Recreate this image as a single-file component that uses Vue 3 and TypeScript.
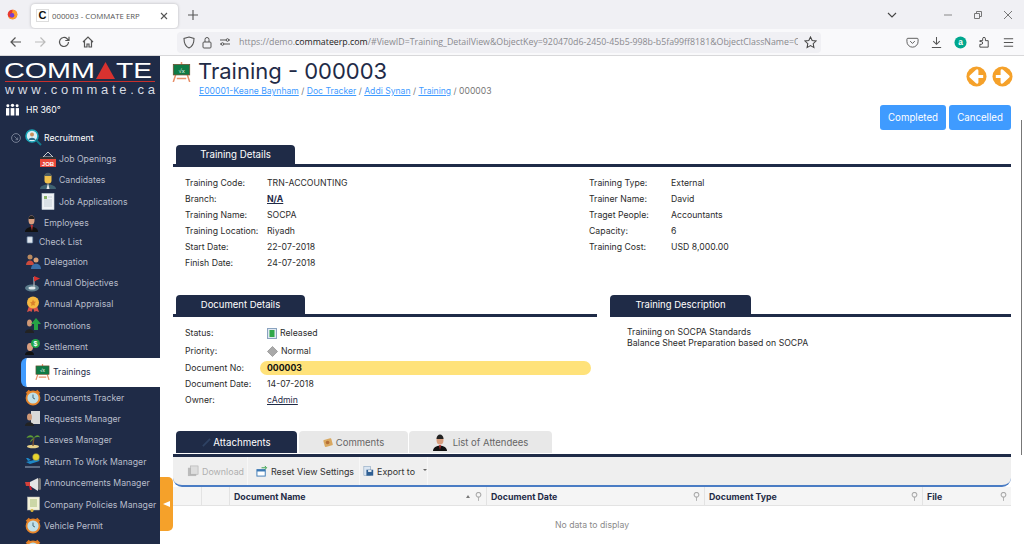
<script setup lang="ts">
interface NavItem { label: string; icon: string; cls?: string }
const icons: Record<string, string> = {
  search: '<circle cx="7" cy="7" r="6" fill="#d8eef5" stroke="#19a5b8" stroke-width="1.6"/><circle cx="7" cy="5.5" r="2" fill="#c98f5c"/><path d="M3.5 11c.5-3 6.500-3 7 0z" fill="#2b6a8a"/><path d="M11 11l5 5" stroke="#127a8c" stroke-width="2"/>',
  job: '<path d="M8 1L3 6h10z" fill="none" stroke="#ccc"/><rect x="0" y="6" width="16" height="10" fill="#e8483a"/><rect x="0" y="6" width="16" height="2" fill="#333"/><text x="8" y="14.500" font-size="6" font-family="Liberation Sans" font-weight="700" fill="#fff" text-anchor="middle">JOB</text>',
  cand: '<path d="M0 17c0-6 16-6 16 0z" fill="#3f6272"/><rect x="4.500" y="1.500" width="7" height="10" rx="3" fill="#f1c14d"/><path d="M4.500 4c0-4.500 7-4.500 7 0z" fill="#4a5a63"/><path d="M8 11l-1.500 6h3z" fill="#e8e8e8"/>',
  doc: '<rect x="2" y="0.500" width="12" height="16" fill="#eef2f6" stroke="#c8d4de" stroke-width=".6"/><path d="M8 4h4M4 7h8M4 9h8M4 11h8M4 13h8" stroke="#b9c7d1" stroke-width=".8"/><rect x="4" y="3" width="3" height="3" fill="#8ab56a"/>',
  emp: '<path d="M0 17c0-6 13-7 13 0z" fill="#111"/><ellipse cx="6.500" cy="5" rx="3" ry="4.500" fill="#d99f80"/><path d="M3.500 4c0-4.500 6-4.500 6 0z" fill="#222"/><path d="M5.500 10h2.500l-1 6z" fill="#b33"/>',
  check: '<rect x="1" y="1" width="8" height="9" rx="1" fill="#dfe6ee" stroke="#6c86a3" stroke-width="1"/>',
  deleg: '<circle cx="5" cy="4" r="2.500" fill="#b98a60"/><path d="M1 12c0-6 8-6 8 0z" fill="#cc4a3c"/><circle cx="11" cy="7" r="2.500" fill="#d8a078"/><path d="M6 16c0-7 10-7 10 0z" fill="#3a6fa8"/>',
  flag: '<ellipse cx="7" cy="13" rx="7" ry="3.500" fill="#5b7c8c"/><ellipse cx="7" cy="13" rx="3.500" ry="1.500" fill="#dfe8ec"/><path d="M9 12V2" stroke="#ccc"/><path d="M9 1l6 2.500-6 3z" fill="#d8322f"/>',
  award: '<path d="M4 10l-2 6 3-1 1.500 1 1.500-4zM12 10l2 6-3-1-1.500 1L8 12z" fill="#d9534a"/><circle cx="8" cy="6.500" r="6" fill="#f5b942"/><path d="M8 3.500l1 2 2 .3-1.500 1.500.4 2.100L8 8.900l-1.900 1 .4-2.100L5 6.300l2-.3z" fill="#d9822b"/>',
  promo: '<path d="M0 16c0-5 9-5 9 0z" fill="#222"/><ellipse cx="4.500" cy="6" rx="2.500" ry="3.500" fill="#cf9876"/><path d="M11 1l5 6h-3v6H9V7H6z" fill="#26a345"/>',
  settle: '<path d="M0 16c0-5 9-5 9 0z" fill="#111"/><ellipse cx="5" cy="8" rx="3" ry="4" fill="#d99f80"/><circle cx="10.500" cy="4.500" r="4.500" fill="#21a84a"/><text x="10.500" y="7" font-size="7" font-family="Liberation Sans" font-weight="700" fill="#fff" text-anchor="middle">$</text>',
  board: '<path d="M3 11l-2 6M13 11l2 6M4 14h8M8 0v2" stroke="#e8906a" stroke-width="1.300"/><rect x="1" y="2" width="14" height="9" fill="#0f7a45" stroke="#6d4a2a" stroke-width=".6"/><text x="8" y="9" font-size="5" font-family="Liberation Sans" fill="#fff" text-anchor="middle">√x</text>',
  clock: '<path d="M1.500 4.500l3-3M14.500 4.500l-3-3" stroke="#e07b22" stroke-width="2.200"/><circle cx="8" cy="9" r="6.500" fill="#bfe0e8" stroke="#e8862a" stroke-width="1.800"/><path d="M8 5.500V9l2 1" stroke="#4a6b78" fill="none"/>',
  req: '<rect x="6" y="1" width="9" height="13" fill="#d8d8d8"/><path d="M0 16c0-5 9-5 9 0z" fill="#222"/><ellipse cx="4.500" cy="7" rx="2.500" ry="3.500" fill="#cf9876"/>',
  palm: '<ellipse cx="8" cy="14.500" rx="6" ry="1.800" fill="#e9d28a"/><path d="M8 14c0-4 .5-6 1-8" stroke="#7a5230" stroke-width="1.300" fill="none"/><path d="M9 6C7 2 3 3 1.500 6c3-1 5-1 7.500 0zM9 6c1-3 5-4 6-.5-2-.8-4-.6-6 .5zM9 6c-2 .5-3.500 2-4 4.500C6.500 9 8 8 9 6z" fill="#5d9b35"/>',
  plane: '<path d="M1 9l12-3c2 0 2 2 0 2.500L5 11z" fill="#1e88c7"/><path d="M3 8L1 5h2l3 2z" fill="#1e88c7"/><circle cx="11" cy="4" r="3.500" fill="#e8d52e" stroke="#555" stroke-width=".4"/><path d="M0 14h15" stroke="#9fb0c4"/>',
  horn: '<path d="M0 7h5v4H1z" fill="#d4403a"/><path d="M5 7l8-4v13l-8-5z" fill="#e4e4e4"/><rect x="13" y="3" width="3" height="12" rx="1.500" fill="#777"/><path d="M4 11l1 4h2l-1-4z" fill="#c23"/>',
  policy: '<rect x="2.500" y="1" width="12" height="13" fill="#f3f2d8" stroke="#bbb" stroke-width=".5"/><path d="M5 4h7M5 6h7M5 8h7M5 10h7" stroke="#8fae5d" stroke-width=".8"/><circle cx="7" cy="14.500" r="1.500" fill="#d8b23a"/>'
}
const recruiting: NavItem[] = [
  { label: 'Job Openings', icon: 'job' },
  { label: 'Candidates', icon: 'cand' },
  { label: 'Job Applications', icon: 'doc' }
]
const before: NavItem[] = [
  { label: 'Employees', icon: 'emp' },
  { label: 'Check List', icon: 'check', cls: 'short' },
  { label: 'Delegation', icon: 'deleg' },
  { label: 'Annual Objectives', icon: 'flag' },
  { label: 'Annual Appraisal', icon: 'award' },
  { label: 'Promotions', icon: 'promo' },
  { label: 'Settlement', icon: 'settle' }
]
const after: NavItem[] = [
  { label: 'Documents Tracker', icon: 'clock' },
  { label: 'Requests Manager', icon: 'req' },
  { label: 'Leaves Manager', icon: 'palm' },
  { label: 'Return To Work Manager', icon: 'plane' },
  { label: 'Announcements Manager', icon: 'horn' },
  { label: 'Company Policies Manager', icon: 'policy' },
  { label: 'Vehicle Permit', icon: 'clock' },
  { label: '', icon: 'clock' }
]
const left = [
  ['Training Code:', 'TRN-ACCOUNTING'], ['Branch:', 'N/A'], ['Training Name:', 'SOCPA'],
  ['Training Location:', 'Riyadh'], ['Start Date:', '22-07-2018'], ['Finish Date:', '24-07-2018']
]
const right = [
  ['Training Type:', 'External'], ['Trainer Name:', 'David'], ['Traget People:', 'Accountants'],
  ['Capacity:', '6'], ['Training Cost:', 'USD 8,000.00']
]
const crumbs = ['E00001-Keane Baynham', 'Doc Tracker', 'Addi Synan', 'Training']
const columns = [
  { name: 'Document Name', cls: 'c-name', sort: true },
  { name: 'Document Date', cls: 'c-date' },
  { name: 'Document Type', cls: 'c-type' },
  { name: 'File', cls: 'c-file' }
]
</script>

<template>
  <div class="screen">
    <header class="chrome">
      <div class="tabstrip">
        <svg class="fx" viewBox="0 0 16 16" width="16" height="16"><circle cx="8" cy="8" r="7" fill="#e8392f"/><path d="M8 1a7 7 0 0 1 7 7c0 4-3 7-7 7-3 0-5-1-6-4 2 2 7 2 8-1 .7-2-1-4-3-4 1-1 1-3 1-5z" fill="#ff9d2a"/><circle cx="7.500" cy="9" r="3.200" fill="#7a3fd0"/></svg>
        <div class="tab">
          <span class="favicon">C</span>
          <span class="tabtitle">000003 - COMMATE ERP</span>
          <svg class="i" viewBox="0 0 10 10" width="10" height="10"><path d="M2 2l6 6M8 2l-6 6" stroke="#555" stroke-width="1.100"/></svg>
        </div>
        <svg class="plus" viewBox="0 0 12 12" width="12" height="12"><path d="M6 1v10M1 6h10" stroke="#555" stroke-width="1.100"/></svg>
        <span class="grow"></span>
        <svg class="win chev" viewBox="0 0 12 12" width="12" height="12"><path d="M2 4l4 4 4-4" stroke="#444" fill="none" stroke-width="1.100"/></svg>
        <svg class="win" viewBox="0 0 10 10" width="10" height="10"><path d="M1 5h8" stroke="#888"/></svg>
        <svg class="win" viewBox="0 0 10 10" width="10" height="10"><path d="M1.500 3.500h5v5h-5zM3.500 3.500v-2h5v5h-2" stroke="#777" fill="none"/></svg>
        <svg class="win last" viewBox="0 0 10 10" width="10" height="10"><path d="M1 1l8 8M9 1l-8 8" stroke="#777"/></svg>
      </div>
      <div class="navbar">
        <svg class="nb first" viewBox="0 0 14 14" width="14" height="14"><path d="M12 7H2M6.500 2.500L2 7l4.500 4.500" stroke="#555" fill="none" stroke-width="1.200"/></svg>
        <svg class="nb" viewBox="0 0 14 14" width="14" height="14"><path d="M2 7h10M7.500 2.500L12 7l-4.500 4.500" stroke="#bbb" fill="none" stroke-width="1.200"/></svg>
        <svg class="nb" viewBox="0 0 14 14" width="14" height="14"><path d="M11.500 7a4.500 4.500 0 1 1-1.400-3.300L12 5.500M12 1.800v3.700H8.300" stroke="#555" fill="none" stroke-width="1.200"/></svg>
        <svg class="nb" viewBox="0 0 14 14" width="14" height="14"><path d="M2 7l5-5 5 5M3.500 6v6h2.500V9h2v3h2.500V6" stroke="#555" fill="none" stroke-width="1.200"/></svg>
        <div class="urlbar">
          <svg viewBox="0 0 12 13" width="12" height="13"><path d="M6 1l5 1.500c0 5-1.500 8-5 9.500C2.500 10.500 1 7.500 1 2.500z" stroke="#555" fill="none" stroke-width="1.100"/></svg>
          <svg viewBox="0 0 12 13" width="12" height="13"><rect x="2" y="6" width="8" height="6" rx="1" stroke="#555" fill="none"/><path d="M4 6V3.500a2 2 0 0 1 4 0V6" stroke="#555" fill="none"/></svg>
          <svg viewBox="0 0 12 12" width="12" height="12"><path d="M1 4h6M10 4h1M1 8h1M5 8h6" stroke="#555"/><circle cx="8.500" cy="4" r="1.300" fill="none" stroke="#555"/><circle cx="3.500" cy="8" r="1.300" fill="none" stroke="#555"/></svg>
          <span class="url">https://demo.<b>commateerp.com</b>/#ViewID=Training_DetailView&amp;ObjectKey=920470d6-2450-45b5-998b-b5fa99ff8181&amp;ObjectClassName=C</span>
          <svg class="star" viewBox="0 0 14 14" width="13" height="13"><path d="M7 1l1.800 3.900 4.200.5-3.100 2.900.8 4.200L7 10.400l-3.700 2.100.8-4.200L1 5.400l4.200-.5z" stroke="#444" fill="none" stroke-width="1.100"/></svg>
        </div>
        <span class="grow"></span>
        <svg class="ext" viewBox="0 0 14 14" width="13" height="13"><path d="M2 2.500h10a1 1 0 0 1 1 1V6a6 6 0 0 1-12 0V3.500a1 1 0 0 1 1-1z" stroke="#555" fill="none"/><path d="M4.500 5.500L7 8l2.500-2.500" stroke="#555" fill="none"/></svg>
        <svg class="ext" viewBox="0 0 14 14" width="13" height="13"><path d="M7 1v8M3.500 5.500L7 9l3.500-3.500M2 12.500h10" stroke="#555" fill="none" stroke-width="1.100"/></svg>
        <svg class="ext" viewBox="0 0 14 14" width="13" height="13"><circle cx="7" cy="7" r="6.500" fill="#00a78e"/><text x="7" y="10" font-size="9" font-weight="700" font-family="Liberation Sans" fill="#fff" text-anchor="middle">a</text></svg>
        <svg class="ext" viewBox="0 0 14 14" width="13" height="13"><path d="M2 5h3V3a1.500 1.500 0 0 1 3 0v2h3v7H2V9h1.500a1.500 1.500 0 0 0 0-3H2z" stroke="#444" fill="none"/></svg>
        <svg class="ext" viewBox="0 0 14 14" width="13" height="13"><path d="M2 3h10M2 7h10M2 11h10" stroke="#555" stroke-width="1.200"/></svg>
      </div>
    </header>

    <div class="app">
      <aside class="side">
        <div class="logo">
          <svg viewBox="0 0 156 42" width="156" height="42">
            <text x="4" y="21" font-size="22" font-family="Liberation Sans" fill="#fff" textLength="91" lengthAdjust="spacingAndGlyphs">COMM</text>
            <path d="M96 22l9.500-17L115 22z" fill="#d8322f"/>
            <text x="116" y="21" font-size="22" font-family="Liberation Sans" fill="#fff" textLength="36" lengthAdjust="spacingAndGlyphs">TE</text>
            <rect x="5" y="24" width="150" height="1" fill="#c8302c"/>
            <text x="5" y="37" font-size="13" font-family="Liberation Sans" fill="#d7dbe3" textLength="150">www.commate.ca</text>
          </svg>
        </div>
        <div class="hr">
          <svg viewBox="0 0 16 14" width="15" height="13"><g fill="#fff"><circle cx="3" cy="3" r="1.600"/><circle cx="8" cy="2.500" r="1.800"/><circle cx="13" cy="3" r="1.600"/><rect x="1" y="5.500" width="3.500" height="8"/><rect x="6" y="5.500" width="4" height="8"/><rect x="11.500" y="5.500" width="3.500" height="8"/></g></svg>
          <span>HR 360°</span>
        </div>
        <nav class="menu">
          <div class="row top">
            <svg class="collapse" viewBox="0 0 10 10" width="10" height="10"><circle cx="5" cy="5" r="4.400" fill="none" stroke="#8a93a6" stroke-width=".8"/><path d="M3.300 3.300l3.400 3.400M6.700 4.500v2.200H4.500" stroke="#8a93a6" stroke-width=".7" fill="none"/></svg>
            <svg class="icon" viewBox="0 0 17 17" width="17" height="17" v-html="icons.search"></svg>
            <span>Recruitment</span>
          </div>
          <div v-for="item in recruiting" :key="item.label" class="row sub">
            <svg class="icon" viewBox="0 0 16 17" width="16" height="17" v-html="icons[item.icon]"></svg>
            <span>{{ item.label }}</span>
          </div>
          <div v-for="item in before" :key="item.label" class="row" :class="item.cls">
            <svg class="icon" viewBox="0 0 16 17" width="16" height="17" v-html="icons[item.icon]"></svg>
            <span>{{ item.label }}</span>
          </div>
          <div class="row active">
            <svg class="icon" viewBox="0 0 16 17" width="15" height="16" v-html="icons.board"></svg>
            <span>Trainings</span>
          </div>
          <div v-for="(item, i) in after" :key="i" class="row">
            <svg class="icon" viewBox="0 0 16 17" width="16" height="17" v-html="icons[item.icon]"></svg>
            <span>{{ item.label }}</span>
          </div>
        </nav>
      </aside>

      <main class="main">
        <div class="handle"><i></i></div>
        <div class="scroll"></div>
        <div class="head">
          <svg class="hicon" viewBox="0 0 16 17" width="19" height="20" v-html="icons.board"></svg>
          <div class="titles">
            <h1>Training - 000003</h1>
            <div class="crumbs">
              <template v-for="c in crumbs" :key="c"><a>{{ c }}</a><span> / </span></template><span>000003</span>
            </div>
          </div>
          <div class="arrows">
            <svg viewBox="0 0 22 22" width="21" height="21"><circle cx="11" cy="11" r="10.500" fill="#f5a12a"/><path d="M18 11H11M11.500 5L5 11l6.500 6z" fill="#fff" stroke="#fff" stroke-width="3" stroke-linejoin="round"/></svg>
            <svg viewBox="0 0 22 22" width="21" height="21"><circle cx="11" cy="11" r="10.500" fill="#f5a12a"/><path d="M4 11h7M10.500 5L17 11l-6.500 6z" fill="#fff" stroke="#fff" stroke-width="3" stroke-linejoin="round"/></svg>
          </div>
        </div>
        <div class="actions">
          <button class="btn b1">Completed</button>
          <button class="btn b2">Cancelled</button>
        </div>

        <section class="group g1">
          <div class="caption"><span class="ctab w1">Training Details</span></div>
          <div class="cols">
            <dl class="fields">
              <template v-for="r in left" :key="r[0]">
                <dt>{{ r[0] }}</dt>
                <dd><a v-if="r[1] === 'N/A'" class="na">{{ r[1] }}</a><template v-else>{{ r[1] }}</template></dd>
              </template>
            </dl>
            <dl class="fields">
              <template v-for="r in right" :key="r[0]">
                <dt>{{ r[0] }}</dt><dd>{{ r[1] }}</dd>
              </template>
            </dl>
          </div>
        </section>

        <div class="two">
          <section class="docs">
            <div class="caption"><span class="ctab w2">Document Details</span></div>
            <dl class="fields dfields">
              <dt class="t1">Status:</dt>
              <dd class="t1"><svg viewBox="0 0 10 11" width="10" height="11"><rect x=".5" y=".5" width="9" height="10" fill="#dfe8f2" stroke="#8aa3bf"/><rect x="2.500" y="2" width="5" height="7" fill="#2fa84a"/></svg><span>Released</span></dd>
              <dt class="t2">Priority:</dt>
              <dd class="t2"><svg viewBox="0 0 12 12" width="11" height="11"><path d="M6 .5L11.500 6 6 11.500.5 6z" fill="#a9a9a9" stroke="#777" stroke-width=".6"/></svg><span>Normal</span></dd>
              <dt class="t3">Document No:</dt>
              <dd class="t3"><span class="pill">000003</span></dd>
              <dt class="t4">Document Date:</dt>
              <dd class="t4">14-07-2018</dd>
              <dt class="t4">Owner:</dt>
              <dd class="t4"><a class="owner">cAdmin</a></dd>
            </dl>
          </section>
          <section class="desc">
            <div class="caption"><span class="ctab w3">Training Description</span></div>
            <p>Trainiing on SOCPA Standards<br>Balance Sheet Preparation based on SOCPA</p>
          </section>
        </div>

        <section class="grid">
          <div class="gtabs">
            <span class="gtab on t-a"><svg viewBox="0 0 10 10" width="9" height="9"><path d="M1 9l8-8" stroke="#2f4263" stroke-width="2"/></svg>Attachments</span>
            <span class="gtab t-b"><svg viewBox="0 0 12 12" width="11" height="11"><rect x="1" y="2" width="9" height="8" rx="1" transform="rotate(-15 6 6)" fill="#d9a860"/><circle cx="5" cy="6" r="2" fill="#b56f36"/></svg>Comments</span>
            <span class="gtab t-c"><svg viewBox="0 0 14 17" width="14" height="17"><path d="M0 17c0-7 14-7 14 0z" fill="#111"/><ellipse cx="7" cy="6" rx="3.500" ry="4.500" fill="#d99f80"/><path d="M3.500 5c0-6 7-6 7 0z" fill="#222"/><path d="M6 11h2l-1 5z" fill="#b33"/></svg>List of Attendees</span>
          </div>
          <div class="toolbar">
            <span class="tool off"><svg viewBox="0 0 13 13" width="12" height="12"><rect x="1" y="3" width="9" height="9" fill="#bbb"/><rect x="4" y="1" width="8" height="9" fill="#ddd" stroke="#aaa" stroke-width=".6"/></svg>Download</span>
            <span class="tool reset"><svg viewBox="0 0 13 13" width="12" height="12"><rect x="1" y="5" width="9" height="7" fill="#fff" stroke="#3a78b5"/><rect x="1" y="5" width="9" height="2" fill="#3a78b5"/><path d="M6 3h5M9.500 1l2 2-2 2" stroke="#2f9e44" fill="none"/></svg>Reset View Settings</span>
            <span class="tool last"><svg viewBox="0 0 13 13" width="12" height="12"><rect x="1" y="1" width="8" height="11" fill="#dbe6f2" stroke="#7f9bb8" stroke-width=".6"/><rect x="4" y="5" width="8" height="7" fill="#2f5f93"/><rect x="6" y="5.500" width="4" height="2" fill="#fff"/></svg>Export to<em></em></span>
          </div>
          <div class="thead">
            <span class="cell c-a"></span><span class="cell c-b"></span>
            <span v-for="col in columns" :key="col.name" class="cell" :class="col.cls">
              <b>{{ col.name }}</b>
              <i v-if="col.sort" class="sort"></i>
              <svg viewBox="0 0 8 10" width="7" height="9"><circle cx="4" cy="3" r="2.700" fill="none" stroke="#a9a9a9" stroke-width="1.200"/><path d="M4 5.500V10" stroke="#a9a9a9"/></svg>
            </span>
          </div>
          <div class="nodata">No data to display</div>
        </section>
      </main>
    </div>
  </div>
</template>

<style>
html, body { margin: 0; padding: 0; overflow: hidden; background: #fff; }
</style>

<style scoped>
.screen { width: 1024px; height: 544px; overflow: hidden; display: flex; flex-direction: column; font-family: Inter, "Noto Sans", sans-serif; font-size: 8.700px; color: #2b2b2b; }
.chrome { height: 56px; flex: none; display: flex; flex-direction: column; box-sizing: border-box; border-bottom: 1px solid #d8d8da; font-family: "Open Sans", "Noto Sans", sans-serif; }
.tabstrip { height: 29px; background: #f0f0f4; display: flex; align-items: center; }
.fx { margin-left: 7px; margin-right: 9px; flex: none; width: 11px; height: 11px; }
.tab { width: 147px; height: 24px; margin-top: 2px; background: #fff; border-radius: 4px; box-shadow: 0 0 3px rgba(0,0,0,.25); display: flex; align-items: center; box-sizing: border-box; padding: 0 9px 0 5px; margin-left: 4px; }
.favicon { width: 11px; height: 11px; background: #fff; border: 1px solid #ddd; font: 700 11px/11px "Liberation Sans", sans-serif; color: #111; text-align: center; margin-right: 3px; }
.tabtitle { flex: 1; font-size: 7.800px; color: #555; white-space: nowrap; }
.plus { margin-left: 9px; }
.grow { flex: 1; }
.win { margin-right: 20px; }
.chev { margin-right: 45px; }
.win.last { margin-right: 11px; }
.navbar { flex: 1; background: #f9f9fb; display: flex; align-items: center; }
.nb { margin-right: 10px; }
.nb.first { margin-left: 9px; }
.urlbar { width: 644px; height: 21px; background: #f0f0f4; border-radius: 4px; display: flex; align-items: center; gap: 6px; padding: 0 4px 0 6px; box-sizing: border-box; overflow: hidden; flex: none; margin-left: 72px; }
.url { font-size: 8.800px; color: #8a8a8f; white-space: nowrap; overflow: hidden; flex: 1; padding-left: 2px; }
.url b { font-weight: 400; color: #222; }
.star { flex: none; }
.ext { margin-right: 11px; }
.ext:last-child { margin-right: 9px; }
.app { flex: 1; display: flex; min-height: 0; }
.side { width: 160px; flex: none; background: #1f2b47; overflow: hidden; color: #b8bdca; }
.logo { height: 43px; padding-top: 1px; }
.logo svg { display: block; }
.hr { height: 19px; display: flex; align-items: center; gap: 6px; padding-left: 5px; color: #fff; font-size: 8.700px; }
.menu { padding-top: 8px; }
.row { height: 21.400px; display: flex; align-items: center; padding-left: 25px; box-sizing: border-box; white-space: nowrap; }
.row .icon { flex: none; margin-right: 3px; }
.row.top { color: #fff; padding-left: 11px; }
.collapse { margin-right: 4px; flex: none; }
.row.top .icon { margin-right: 2px; }
.row.sub { padding-left: 40px; }
.row.short { height: 17px; padding-left: 26px; }
.row.short .icon { width: 12px; height: 12px; margin-right: 1px; }
.row.active { height: 29px; margin-left: 21px; padding-left: 9px; background: #fff; color: #1f2b47; border-left: 5px solid #3f9bff; border-radius: 6px 0 0 6px; }
.main { flex: 1; position: relative; padding: 0 13px; min-width: 0; }
.handle { position: absolute; left: 0; top: 421px; width: 13px; height: 54px; background: #f5a12a; border-radius: 0 5px 5px 0; display: flex; align-items: center; justify-content: center; z-index: 2; }
.handle i { width: 0; height: 0; border-right: 7px solid #fff; border-top: 3.500px solid transparent; border-bottom: 3.500px solid transparent; }
.scroll { position: absolute; right: 2px; top: 64px; width: 1px; height: 335px; background: #777; }
.head { display: flex; height: 41px; padding-top: 1px; box-sizing: border-box; }
.hicon { margin: 5px 0 0 -1px; flex: none; }
.titles { margin-left: 7px; flex: 1; }
h1 { margin: 0; font-size: 22px; line-height: 28px; font-weight: 400; color: #1f2b47; }
.crumbs { font-size: 8.600px; line-height: 12px; color: #777; padding-left: 1px; }
.crumbs a { color: #3f9bff; text-decoration: underline; }
.arrows { display: flex; gap: 5px; margin: 9px -2px 0 0; }
.arrows svg { display: block; }
.actions { display: flex; justify-content: flex-end; gap: 3px; margin-top: 8px; height: 25px; }
.btn { border: 0; background: #3f9bff; color: #fff; border-radius: 3px; font: 400 9.700px Inter, sans-serif; padding: 0; height: 25px; }
.b1 { width: 66px; }
.b2 { width: 62px; }
.caption { border-bottom: 3px solid #1f2b47; height: 19px; box-sizing: content-box; padding-left: 3px; }
.ctab { display: block; height: 19px; background: #1f2b47; color: #fff; border-radius: 4px 4px 0 0; font-size: 9.500px; line-height: 19px; text-align: center; box-sizing: border-box; }
.w1 { width: 119px; font-size: 9.700px; }
.w2 { width: 129px; }
.w3 { width: 141px; }
.g1 { margin-top: 15px; }
.cols { display: grid; grid-template-columns: 404px 1fr; padding: 8px 0 0 12px; }
.fields { margin: 0; display: grid; grid-template-columns: 82px 1fr; grid-auto-rows: 16px; align-items: center; align-content: start; }
.fields dt, .fields dd { margin: 0; white-space: nowrap; }
.na { font-weight: 700; text-decoration: underline; color: #1f2b47; }
.two { display: grid; grid-template-columns: 424px 401px; column-gap: 13px; margin-top: 24px; height: 130px; }
.desc .caption { padding-left: 0; }
.desc p { margin: 10px 0 0 17px; line-height: 11px; }
.dfields { padding: 7px 0 0 12px; grid-auto-rows: auto; }
.dfields dt, .dfields dd { display: flex; align-items: center; }
.dfields dd { gap: 3px; }
.dfields .t1, .dfields .t2 { height: 18px; }
.dfields .t3, .dfields .t4 { height: 16px; }
.owner { text-decoration: underline; color: #1f2b47; }
.pill { display: block; width: 331px; height: 14px; margin-left: -7px; padding-left: 7px; box-sizing: border-box; background: #ffe27a; border-radius: 7px; font-weight: 700; line-height: 14px; color: #111; }
.grid { margin-top: 6px; }
.gtabs { display: flex; height: 22px; padding-left: 3px; gap: 1px; align-items: flex-end; }
.gtab { height: 22px; border-radius: 4px 4px 0 0; background: #e8e8e8; color: #666; font-size: 9.500px; display: flex; align-items: center; justify-content: center; gap: 2px; box-sizing: border-box; }
.gtab.on { background: #1f2b47; color: #fff; font-size: 9.700px; }
.t-a { width: 121px; margin-right: 1px; }
.t-b { width: 109px; }
.t-c { width: 143px; gap: 6px; }
.toolbar { height: 33px; margin-top: 1px; border-top: 3px solid #1f2b47; border-bottom: 2px solid #4a7cc4; border-radius: 0 0 9px 9px; background: #efefef; display: flex; box-sizing: border-box; padding-left: 3px; }
.tool { display: flex; align-items: center; gap: 3px; border-right: 1px solid #f7f7f7; color: #333; white-space: nowrap; font-size: 8.900px; box-sizing: border-box; }
.tool.off { color: #b0b0b0; width: 72px; padding-left: 11px; }
.tool.reset { width: 112px; padding-left: 8px; }
.tool.last { width: 68px; padding-left: 3px; }
.tool em { width: 0; height: 0; margin-left: 5px; margin-bottom: 3px; border-left: 2px solid transparent; border-right: 2px solid transparent; border-top: 2px solid #666; }
.thead { display: flex; height: 19px; background: #f5f5f5; border-bottom: 1px solid #e3e3e3; box-sizing: border-box; }
.cell { display: flex; align-items: center; border-right: 1px solid #e3e3e3; box-sizing: border-box; padding: 0 4px; gap: 3px; }
.cell b { flex: 1; color: #1f2b47; font-weight: 700; font-size: 8.800px; white-space: nowrap; }
.c-a { width: 29px; }
.c-b { width: 28px; }
.c-name { width: 257px; }
.c-date { width: 218px; }
.c-type { width: 218px; }
.c-file { width: 88px; border-right: 0; }
.sort { width: 0; height: 0; border-left: 2px solid transparent; border-right: 2px solid transparent; border-bottom: 3px solid #777; margin-right: 2px; }
.nodata { text-align: center; color: #8a8a8a; margin-top: 13px; line-height: 12px; }
</style>
